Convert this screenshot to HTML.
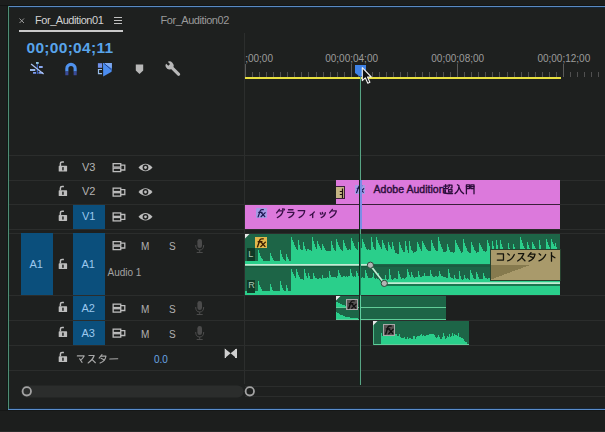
<!DOCTYPE html>
<html><head><meta charset="utf-8"><style>
*{margin:0;padding:0;box-sizing:border-box}
html,body{width:605px;height:432px;overflow:hidden;background:#1c1e1d;font-family:"Liberation Sans",sans-serif}
.a{position:absolute;white-space:nowrap;line-height:1}
</style></head><body>

<svg class="a" style="left:0;top:0" width="605" height="432" viewBox="0 0 605 432" shape-rendering="crispEdges">
<rect x="9" y="7" width="596" height="402" fill="#1e201f"/>
<rect x="0" y="5" width="605" height="1" fill="#131514"/>
<rect x="8" y="6" width="597" height="1" fill="#5a8ac2"/>
<rect x="9" y="7" width="596" height="1" fill="#15273a"/>
<rect x="7" y="6" width="1" height="404" fill="#0f1c16"/>
<rect x="8" y="6" width="1" height="404" fill="#4f8d75"/>
<rect x="9" y="7" width="1" height="402" fill="#1a2520"/>
<rect x="9" y="408" width="596" height="1" fill="#15273a"/>
<rect x="8" y="409" width="597" height="1" fill="#5a8cca"/>
<rect x="0" y="410" width="605" height="1" fill="#151716"/>
<rect x="0" y="431" width="605" height="1" fill="#2a2c2b"/>
<rect x="19" y="30" width="104" height="2" fill="#c9c9c9"/>
<rect x="114" y="17" width="8" height="1" fill="#c0c0c0"/>
<rect x="114" y="20" width="8" height="1" fill="#c0c0c0"/>
<rect x="114" y="23" width="8" height="1" fill="#c0c0c0"/>
<path d="M19.5,18.5 L24,23 M24,18.5 L19.5,23" stroke="#9a9a9a" stroke-width="1" shape-rendering="geometricPrecision"/>
<rect x="244" y="33" width="1" height="351" fill="#2c2e2d"/>
<rect x="9" y="155" width="596" height="1" fill="#2b2d2c"/>
<rect x="9" y="180" width="596" height="1" fill="#2b2d2c"/>
<rect x="9" y="204" width="596" height="1" fill="#2b2d2c"/>
<rect x="9" y="229" width="596" height="1" fill="#2b2d2c"/>
<rect x="9" y="233" width="596" height="1" fill="#2b2d2c"/>
<rect x="9" y="295" width="596" height="1" fill="#2b2d2c"/>
<rect x="9" y="320" width="596" height="1" fill="#2b2d2c"/>
<rect x="9" y="345" width="596" height="1" fill="#2b2d2c"/>
<rect x="9" y="370" width="596" height="1" fill="#2b2d2c"/>
<rect x="21" y="385.5" width="222.5" height="12" rx="6" fill="#2b2d2c" shape-rendering="geometricPrecision"/>
<rect x="245" y="386" width="360" height="1" fill="#2b2d2c"/>
<rect x="245" y="396" width="360" height="1" fill="#2b2d2c"/>
<circle cx="26.8" cy="391.3" r="4.2" fill="none" stroke="#a3a3a3" stroke-width="1.8" shape-rendering="geometricPrecision"/>
<circle cx="249.8" cy="391.3" r="4.2" fill="none" stroke="#a3a3a3" stroke-width="1.8" shape-rendering="geometricPrecision"/>
<rect x="245" y="64" width="1" height="13" fill="#5a5a5a"/>
<rect x="252" y="72" width="1" height="5" fill="#505050"/>
<rect x="259" y="72" width="1" height="5" fill="#505050"/>
<rect x="266" y="72" width="1" height="5" fill="#505050"/>
<rect x="273" y="72" width="1" height="5" fill="#505050"/>
<rect x="280" y="72" width="1" height="5" fill="#505050"/>
<rect x="287" y="72" width="1" height="5" fill="#505050"/>
<rect x="294" y="72" width="1" height="5" fill="#505050"/>
<rect x="301" y="72" width="1" height="5" fill="#505050"/>
<rect x="308" y="72" width="1" height="5" fill="#505050"/>
<rect x="316" y="72" width="1" height="5" fill="#505050"/>
<rect x="323" y="72" width="1" height="5" fill="#505050"/>
<rect x="330" y="72" width="1" height="5" fill="#505050"/>
<rect x="337" y="72" width="1" height="5" fill="#505050"/>
<rect x="344" y="72" width="1" height="5" fill="#505050"/>
<rect x="351" y="64" width="1" height="13" fill="#5a5a5a"/>
<rect x="358" y="72" width="1" height="5" fill="#505050"/>
<rect x="365" y="72" width="1" height="5" fill="#505050"/>
<rect x="372" y="72" width="1" height="5" fill="#505050"/>
<rect x="379" y="72" width="1" height="5" fill="#505050"/>
<rect x="386" y="72" width="1" height="5" fill="#505050"/>
<rect x="393" y="72" width="1" height="5" fill="#505050"/>
<rect x="400" y="72" width="1" height="5" fill="#505050"/>
<rect x="407" y="72" width="1" height="5" fill="#505050"/>
<rect x="415" y="72" width="1" height="5" fill="#505050"/>
<rect x="422" y="72" width="1" height="5" fill="#505050"/>
<rect x="429" y="72" width="1" height="5" fill="#505050"/>
<rect x="436" y="72" width="1" height="5" fill="#505050"/>
<rect x="443" y="72" width="1" height="5" fill="#505050"/>
<rect x="450" y="72" width="1" height="5" fill="#505050"/>
<rect x="457" y="64" width="1" height="13" fill="#5a5a5a"/>
<rect x="464" y="72" width="1" height="5" fill="#505050"/>
<rect x="471" y="72" width="1" height="5" fill="#505050"/>
<rect x="478" y="72" width="1" height="5" fill="#505050"/>
<rect x="485" y="72" width="1" height="5" fill="#505050"/>
<rect x="492" y="72" width="1" height="5" fill="#505050"/>
<rect x="499" y="72" width="1" height="5" fill="#505050"/>
<rect x="507" y="72" width="1" height="5" fill="#505050"/>
<rect x="514" y="72" width="1" height="5" fill="#505050"/>
<rect x="521" y="72" width="1" height="5" fill="#505050"/>
<rect x="528" y="72" width="1" height="5" fill="#505050"/>
<rect x="535" y="72" width="1" height="5" fill="#505050"/>
<rect x="542" y="72" width="1" height="5" fill="#505050"/>
<rect x="549" y="72" width="1" height="5" fill="#505050"/>
<rect x="556" y="72" width="1" height="5" fill="#505050"/>
<rect x="563" y="64" width="1" height="13" fill="#5a5a5a"/>
<rect x="570" y="72" width="1" height="5" fill="#505050"/>
<rect x="577" y="72" width="1" height="5" fill="#505050"/>
<rect x="584" y="72" width="1" height="5" fill="#505050"/>
<rect x="591" y="72" width="1" height="5" fill="#505050"/>
<rect x="598" y="72" width="1" height="5" fill="#505050"/>
<rect x="245" y="77" width="316" height="2" fill="#e8e040"/>
<rect x="73" y="205" width="32" height="24" fill="#0b4f7c"/>
<rect x="21" y="233" width="32" height="62" fill="#0b4f7c"/>
<rect x="73" y="233" width="32" height="62" fill="#0b4f7c"/>
<rect x="73" y="296" width="32" height="24" fill="#0b4f7c"/>
<rect x="73" y="321" width="32" height="24" fill="#0b4f7c"/>
<g shape-rendering="geometricPrecision"><rect x="58.699999999999996" y="165.8" width="8.4" height="5.8" rx="0.6" fill="#bdbdbd"/><path d="M60.4,166.0 L60.4,163.4 Q60.4,161.9 62.099999999999994,161.9 L63.9,161.9" fill="none" stroke="#bdbdbd" stroke-width="1.5"/><rect x="62.199999999999996" y="167.0" width="1.5" height="3.4" rx="0.6" fill="#1e201f"/></g>
<g fill="none" stroke="#bdbdbd" stroke-width="1.3" shape-rendering="geometricPrecision"><rect x="113.15" y="163.65" width="7.6" height="3.4"/><rect x="113.15" y="168.2" width="7.6" height="3.4"/><path d="M120.8,165.2 L124.8,165.2 L124.8,170.0 L120.8,170.0"/></g>
<g shape-rendering="geometricPrecision"><path d="M138.5,167.5 Q145.5,160.0 152.5,167.5 Q145.5,175.0 138.5,167.5 Z" fill="#bdbdbd"/><circle cx="145.5" cy="167.5" r="2.9" fill="#1f2120"/><circle cx="145.5" cy="167.5" r="1.4" fill="#bdbdbd"/></g>
<g shape-rendering="geometricPrecision"><rect x="58.699999999999996" y="190.3" width="8.4" height="5.8" rx="0.6" fill="#bdbdbd"/><path d="M60.4,190.5 L60.4,187.9 Q60.4,186.4 62.099999999999994,186.4 L63.9,186.4" fill="none" stroke="#bdbdbd" stroke-width="1.5"/><rect x="62.199999999999996" y="191.5" width="1.5" height="3.4" rx="0.6" fill="#1e201f"/></g>
<g fill="none" stroke="#bdbdbd" stroke-width="1.3" shape-rendering="geometricPrecision"><rect x="113.15" y="188.15" width="7.6" height="3.4"/><rect x="113.15" y="192.7" width="7.6" height="3.4"/><path d="M120.8,189.7 L124.8,189.7 L124.8,194.5 L120.8,194.5"/></g>
<g shape-rendering="geometricPrecision"><path d="M138.5,192 Q145.5,184.5 152.5,192 Q145.5,199.5 138.5,192 Z" fill="#bdbdbd"/><circle cx="145.5" cy="192" r="2.9" fill="#1f2120"/><circle cx="145.5" cy="192" r="1.4" fill="#bdbdbd"/></g>
<g shape-rendering="geometricPrecision"><rect x="58.699999999999996" y="215.10000000000002" width="8.4" height="5.8" rx="0.6" fill="#bdbdbd"/><path d="M60.4,215.3 L60.4,212.70000000000002 Q60.4,211.20000000000002 62.099999999999994,211.20000000000002 L63.9,211.20000000000002" fill="none" stroke="#bdbdbd" stroke-width="1.5"/><rect x="62.199999999999996" y="216.3" width="1.5" height="3.4" rx="0.6" fill="#1e201f"/></g>
<g fill="none" stroke="#bdbdbd" stroke-width="1.3" shape-rendering="geometricPrecision"><rect x="113.15" y="212.95000000000002" width="7.6" height="3.4"/><rect x="113.15" y="217.5" width="7.6" height="3.4"/><path d="M120.8,214.5 L124.8,214.5 L124.8,219.3 L120.8,219.3"/></g>
<g shape-rendering="geometricPrecision"><path d="M138.5,216.8 Q145.5,209.3 152.5,216.8 Q145.5,224.3 138.5,216.8 Z" fill="#bdbdbd"/><circle cx="145.5" cy="216.8" r="2.9" fill="#1f2120"/><circle cx="145.5" cy="216.8" r="1.4" fill="#bdbdbd"/></g>
<g shape-rendering="geometricPrecision"><rect x="58.699999999999996" y="263.3" width="8.4" height="5.8" rx="0.6" fill="#bdbdbd"/><path d="M60.4,263.5 L60.4,260.90000000000003 Q60.4,259.40000000000003 62.099999999999994,259.40000000000003 L63.9,259.40000000000003" fill="none" stroke="#bdbdbd" stroke-width="1.5"/><rect x="62.199999999999996" y="264.5" width="1.5" height="3.4" rx="0.6" fill="#1e201f"/></g>
<g fill="none" stroke="#bdbdbd" stroke-width="1.3" shape-rendering="geometricPrecision"><rect x="113.15" y="241.65" width="7.6" height="3.4"/><rect x="113.15" y="246.2" width="7.6" height="3.4"/><path d="M120.8,243.2 L124.8,243.2 L124.8,248.0 L120.8,248.0"/></g>
<g shape-rendering="geometricPrecision" fill="none" stroke="#4b4b4b"><rect x="197.39999999999998" y="239" width="4.6" height="9" rx="2.3" fill="#4b4b4b" stroke="none"/><path d="M195.7,245 Q195.7,250 199.7,250 Q203.7,250 203.7,245" stroke-width="1"/><path d="M199.7,250 L199.7,252.5 M196.7,252.5 L202.7,252.5" stroke-width="1"/></g>
<g shape-rendering="geometricPrecision"><rect x="58.699999999999996" y="306.3" width="8.4" height="5.8" rx="0.6" fill="#bdbdbd"/><path d="M60.4,306.5 L60.4,303.90000000000003 Q60.4,302.40000000000003 62.099999999999994,302.40000000000003 L63.9,302.40000000000003" fill="none" stroke="#bdbdbd" stroke-width="1.5"/><rect x="62.199999999999996" y="307.5" width="1.5" height="3.4" rx="0.6" fill="#1e201f"/></g>
<g fill="none" stroke="#bdbdbd" stroke-width="1.3" shape-rendering="geometricPrecision"><rect x="113.15" y="304.15" width="7.6" height="3.4"/><rect x="113.15" y="308.7" width="7.6" height="3.4"/><path d="M120.8,305.7 L124.8,305.7 L124.8,310.5 L120.8,310.5"/></g>
<g shape-rendering="geometricPrecision" fill="none" stroke="#4b4b4b"><rect x="197.39999999999998" y="301" width="4.6" height="9" rx="2.3" fill="#4b4b4b" stroke="none"/><path d="M195.7,307 Q195.7,312 199.7,312 Q203.7,312 203.7,307" stroke-width="1"/><path d="M199.7,312 L199.7,314.5 M196.7,314.5 L202.7,314.5" stroke-width="1"/></g>
<g shape-rendering="geometricPrecision"><rect x="58.699999999999996" y="331.3" width="8.4" height="5.8" rx="0.6" fill="#bdbdbd"/><path d="M60.4,331.5 L60.4,328.90000000000003 Q60.4,327.40000000000003 62.099999999999994,327.40000000000003 L63.9,327.40000000000003" fill="none" stroke="#bdbdbd" stroke-width="1.5"/><rect x="62.199999999999996" y="332.5" width="1.5" height="3.4" rx="0.6" fill="#1e201f"/></g>
<g fill="none" stroke="#bdbdbd" stroke-width="1.3" shape-rendering="geometricPrecision"><rect x="113.15" y="329.15" width="7.6" height="3.4"/><rect x="113.15" y="333.7" width="7.6" height="3.4"/><path d="M120.8,330.7 L124.8,330.7 L124.8,335.5 L120.8,335.5"/></g>
<g shape-rendering="geometricPrecision" fill="none" stroke="#4b4b4b"><rect x="197.39999999999998" y="326" width="4.6" height="9" rx="2.3" fill="#4b4b4b" stroke="none"/><path d="M195.7,332 Q195.7,337 199.7,337 Q203.7,337 203.7,332" stroke-width="1"/><path d="M199.7,337 L199.7,339.5 M196.7,339.5 L202.7,339.5" stroke-width="1"/></g>
<g shape-rendering="geometricPrecision"><rect x="58.699999999999996" y="356.3" width="8.4" height="5.8" rx="0.6" fill="#bdbdbd"/><path d="M60.4,356.5 L60.4,353.90000000000003 Q60.4,352.40000000000003 62.099999999999994,352.40000000000003 L63.9,352.40000000000003" fill="none" stroke="#bdbdbd" stroke-width="1.5"/><rect x="62.199999999999996" y="357.5" width="1.5" height="3.4" rx="0.6" fill="#1e201f"/></g>
<path d="M224.7,348.5 L230.6,353.3 L236.5,348.5 L236.5,358.2 L230.6,353.3 L224.7,358.2 Z" fill="#cfcfcf" shape-rendering="geometricPrecision"/>
<rect x="224.7" y="348.5" width="1.4" height="9.7" fill="#cfcfcf"/><rect x="235.1" y="348.5" width="1.4" height="9.7" fill="#cfcfcf"/>
<g shape-rendering="geometricPrecision" fill="none"><rect x="36" y="62" width="2.7" height="1.9" fill="#8fc4e0"/><path d="M37.3,64 L37.3,74" stroke="#3a6ad8" stroke-width="1"/><path d="M30,70 L35.3,70" stroke="#9ab8e8" stroke-width="2"/><path d="M39,67 L42.7,67" stroke="#8aa8f0" stroke-width="2"/><path d="M33,72.8 L36,72.8 M38.5,72.8 L43,72.8" stroke="#7a98ee" stroke-width="1.8"/><path d="M31.1,64 L43.6,73.9" stroke="#a8c0f0" stroke-width="1.3"/></g>
<path d="M65.3,71.5 L65.3,68.5 A5.7,5.7 0 0 1 76.7,68.5 L76.7,71.5 L73.6,71.5 L73.6,68.5 A2.6,2.6 0 0 0 68.4,68.5 L68.4,71.5 Z" fill="#4f92ee" shape-rendering="geometricPrecision"/>
<path d="M65.3,71.5 L68.4,71.5 L68.4,75.3 L65.3,75.3 Z M73.6,71.5 L76.7,71.5 L76.7,75.3 L73.6,75.3 Z" fill="#3a4a98" shape-rendering="geometricPrecision"/>
<g shape-rendering="geometricPrecision"><rect x="97.9" y="63.2" width="4.3" height="4.6" fill="#7190ea"/><path d="M102,69.5 L98.5,69.5 L98.5,73.6 L102,73.6" stroke="#98bce8" stroke-width="1.2" fill="none"/><path d="M103,63 L111.8,63 L111.8,68.2 L111.6,71.8 L103.2,76.5 Z" fill="#4b8cf0"/><path d="M103.2,63 L111.8,63 L111.8,68.2 Z" fill="#7fa8ee"/><path d="M104,63.4 L111.2,69.5" stroke="#1d3d8a" stroke-width="1"/></g>
<path d="M135.8,64.6 L143.2,64.6 L143.2,70.4 L139.5,74 L135.8,70.4 Z" fill="#b8b8b8" shape-rendering="geometricPrecision"/>
<g transform="translate(169.6,65.4) rotate(-45)" shape-rendering="geometricPrecision"><circle cx="0" cy="0" r="3.9" fill="#b8b8b8"/><rect x="-1.5" y="0" width="3.1" height="14.2" rx="1.4" fill="#b8b8b8"/><rect x="-1.25" y="-5" width="2.5" height="4.4" fill="#1e201f"/></g>
<rect x="336" y="180" width="224" height="24" fill="#dc79dc"/>
<rect x="245" y="205" width="315" height="24" fill="#dc79dc"/>
<rect x="336" y="204" width="224" height="1" fill="#3a1f3a"/>
<rect x="336" y="186" width="9" height="13" fill="#3e1e3c"/><rect x="336" y="187" width="8" height="11" fill="#c4b483"/>
<path d="M342.5,188.5 L342.5,198 M339.8,191.5 L342.5,191.5 M339.8,194.5 L342.5,194.5" stroke="#1e1010" stroke-width="1.2" fill="none" shape-rendering="geometricPrecision"/>
<rect x="354.5" y="184.5" width="10.5" height="9" fill="#a49be4"/>
<g transform="translate(354.5,184.5) scale(1.05,0.9)" fill="none" stroke="#1b1650" stroke-width="1.14" stroke-linecap="round" shape-rendering="geometricPrecision"><path d="M2.0,9.0 L4.0,2.6 Q4.4,1.4 5.6,1.4 L7.0,1.4"/><path d="M2.6,4.2 L5.8,4.2"/><path d="M5.0,4.6 L8.4,8.6"/><path d="M8.8,4.6 L4.8,8.8"/></g>
<rect x="256" y="208.3" width="10.5" height="9.6" fill="#a49be4"/>
<g transform="translate(256,208.3) scale(1.05,0.96)" fill="none" stroke="#1b1650" stroke-width="1.14" stroke-linecap="round" shape-rendering="geometricPrecision"><path d="M2.0,9.0 L4.0,2.6 Q4.4,1.4 5.6,1.4 L7.0,1.4"/><path d="M2.6,4.2 L5.8,4.2"/><path d="M5.0,4.6 L8.4,8.6"/><path d="M8.8,4.6 L4.8,8.8"/></g>
<rect x="245" y="234" width="315" height="61" fill="#1d6547"/>
<path d="M245,264 L245.0,261.1 L246.0,261.1 L246.0,261.1 L247.0,261.1 L247.0,261.1 L248.0,261.1 L248.0,261.1 L249.0,261.1 L249.0,250.9 L250.0,250.9 L250.0,255.3 L251.0,255.3 L251.0,258.1 L252.0,258.1 L252.0,260.1 L253.0,260.1 L253.0,261.1 L254.0,261.1 L254.0,261.1 L255.0,261.1 L255.0,261.1 L256.0,261.1 L256.0,261.1 L257.0,261.1 L257.0,261.1 L258.0,261.1 L258.0,249.5 L259.0,249.5 L259.0,253.1 L260.0,253.1 L260.0,255.8 L261.0,255.8 L261.0,257.8 L262.0,257.8 L262.0,259.4 L263.0,259.4 L263.0,260.5 L264.0,260.5 L264.0,261.1 L265.0,261.1 L265.0,261.1 L266.0,261.1 L266.0,261.1 L267.0,261.1 L267.0,261.1 L268.0,261.1 L268.0,261.1 L269.0,261.1 L269.0,261.1 L270.0,261.1 L270.0,253.0 L271.0,253.0 L271.0,256.1 L272.0,256.1 L272.0,258.3 L273.0,258.3 L273.0,259.9 L274.0,259.9 L274.0,261.1 L275.0,261.1 L275.0,261.1 L276.0,261.1 L276.0,261.1 L277.0,261.1 L277.0,261.1 L278.0,261.1 L278.0,261.1 L279.0,261.1 L279.0,261.1 L280.0,261.1 L280.0,249.5 L281.0,249.5 L281.0,253.6 L282.0,253.6 L282.0,256.6 L283.0,256.6 L283.0,258.7 L284.0,258.7 L284.0,260.2 L285.0,260.2 L285.0,261.1 L286.0,261.1 L286.0,253.6 L287.0,253.6 L287.0,257.0 L288.0,257.0 L288.0,259.3 L289.0,259.3 L289.0,260.9 L290.0,260.9 L290.0,261.1 L291.0,261.1 L291.0,237.0 L292.0,237.0 L292.0,239.9 L293.0,239.9 L293.0,242.4 L294.0,242.4 L294.0,244.7 L295.0,244.7 L295.0,246.7 L296.0,246.7 L296.0,248.5 L297.0,248.5 L297.0,249.5 L298.0,249.5 L298.0,240.1 L299.0,240.1 L299.0,245.2 L300.0,245.2 L300.0,248.6 L301.0,248.6 L301.0,249.9 L302.0,249.9 L302.0,249.7 L303.0,249.7 L303.0,242.1 L304.0,242.1 L304.0,245.6 L305.0,245.6 L305.0,248.6 L306.0,248.6 L306.0,250.5 L307.0,250.5 L307.0,249.0 L308.0,249.0 L308.0,249.2 L309.0,249.2 L309.0,249.8 L310.0,249.8 L310.0,250.0 L311.0,250.0 L311.0,251.0 L312.0,251.0 L312.0,236.9 L313.0,236.9 L313.0,240.7 L314.0,240.7 L314.0,244.1 L315.0,244.1 L315.0,246.9 L316.0,246.9 L316.0,249.3 L317.0,249.3 L317.0,241.2 L318.0,241.2 L318.0,243.9 L319.0,243.9 L319.0,246.3 L320.0,246.3 L320.0,248.4 L321.0,248.4 L321.0,250.2 L322.0,250.2 L322.0,243.6 L323.0,243.6 L323.0,245.8 L324.0,245.8 L324.0,247.8 L325.0,247.8 L325.0,249.6 L326.0,249.6 L326.0,251.1 L327.0,251.1 L327.0,250.9 L328.0,250.9 L328.0,251.0 L329.0,251.0 L329.0,251.2 L330.0,251.2 L330.0,251.4 L331.0,251.4 L331.0,241.2 L332.0,241.2 L332.0,244.6 L333.0,244.6 L333.0,247.5 L334.0,247.5 L334.0,249.9 L335.0,249.9 L335.0,251.1 L336.0,251.1 L336.0,239.4 L337.0,239.4 L337.0,242.1 L338.0,242.1 L338.0,244.5 L339.0,244.5 L339.0,246.7 L340.0,246.7 L340.0,248.6 L341.0,248.6 L341.0,250.3 L342.0,250.3 L342.0,251.3 L343.0,251.3 L343.0,240.0 L344.0,240.0 L344.0,243.1 L345.0,243.1 L345.0,245.8 L346.0,245.8 L346.0,248.1 L347.0,248.1 L347.0,250.1 L348.0,250.1 L348.0,249.8 L349.0,249.8 L349.0,249.4 L350.0,249.4 L350.0,250.2 L351.0,250.2 L351.0,238.0 L352.0,238.0 L352.0,240.9 L353.0,240.9 L353.0,243.4 L354.0,243.4 L354.0,245.6 L355.0,245.6 L355.0,247.6 L356.0,247.6 L356.0,249.4 L357.0,249.4 L357.0,249.8 L358.0,249.8 L358.0,241.7 L359.0,241.7 L359.0,244.1 L360.0,244.1 L360.0,246.2 L361.0,246.2 L361.0,248.1 L362.0,248.1 L362.0,238.6 L363.0,238.6 L363.0,241.6 L364.0,241.6 L364.0,244.2 L365.0,244.2 L365.0,246.5 L366.0,246.5 L366.0,248.5 L367.0,248.5 L367.0,249.7 L368.0,249.7 L368.0,249.2 L369.0,249.2 L369.0,249.6 L370.0,249.6 L370.0,249.6 L371.0,249.6 L371.0,237.0 L372.0,237.0 L372.0,242.3 L373.0,242.3 L373.0,246.5 L374.0,246.5 L374.0,248.9 L375.0,248.9 L375.0,250.2 L376.0,250.2 L376.0,237.2 L377.0,237.2 L377.0,240.1 L378.0,240.1 L378.0,242.6 L379.0,242.6 L379.0,244.9 L380.0,244.9 L380.0,246.9 L381.0,246.9 L381.0,248.7 L382.0,248.7 L382.0,240.1 L383.0,240.1 L383.0,242.9 L384.0,242.9 L384.0,245.4 L385.0,245.4 L385.0,247.6 L386.0,247.6 L386.0,249.5 L387.0,249.5 L387.0,251.2 L388.0,251.2 L388.0,242.2 L389.0,242.2 L389.0,244.9 L390.0,244.9 L390.0,247.3 L391.0,247.3 L391.0,249.3 L392.0,249.3 L392.0,241.6 L393.0,241.6 L393.0,246.1 L394.0,246.1 L394.0,249.7 L395.0,249.7 L395.0,252.6 L396.0,252.6 L396.0,252.6 L397.0,252.6 L397.0,253.8 L398.0,253.8 L398.0,253.9 L399.0,253.9 L399.0,241.6 L400.0,241.6 L400.0,245.0 L401.0,245.0 L401.0,247.9 L402.0,247.9 L402.0,250.3 L403.0,250.3 L403.0,252.4 L404.0,252.4 L404.0,252.3 L405.0,252.3 L405.0,240.5 L406.0,240.5 L406.0,245.5 L407.0,245.5 L407.0,249.5 L408.0,249.5 L408.0,252.5 L409.0,252.5 L409.0,240.9 L410.0,240.9 L410.0,245.8 L411.0,245.8 L411.0,249.7 L412.0,249.7 L412.0,251.4 L413.0,251.4 L413.0,252.5 L414.0,252.5 L414.0,251.6 L415.0,251.6 L415.0,252.2 L416.0,252.2 L416.0,251.1 L417.0,251.1 L417.0,241.7 L418.0,241.7 L418.0,244.3 L419.0,244.3 L419.0,246.6 L420.0,246.6 L420.0,248.7 L421.0,248.7 L421.0,250.5 L422.0,250.5 L422.0,240.6 L423.0,240.6 L423.0,243.1 L424.0,243.1 L424.0,245.3 L425.0,245.3 L425.0,247.2 L426.0,247.2 L426.0,249.0 L427.0,249.0 L427.0,249.8 L428.0,249.8 L428.0,251.0 L429.0,251.0 L429.0,251.3 L430.0,251.3 L430.0,250.8 L431.0,250.8 L431.0,240.2 L432.0,240.2 L432.0,243.2 L433.0,243.2 L433.0,245.9 L434.0,245.9 L434.0,248.2 L435.0,248.2 L435.0,250.2 L436.0,250.2 L436.0,251.1 L437.0,251.1 L437.0,250.8 L438.0,250.8 L438.0,236.9 L439.0,236.9 L439.0,240.8 L440.0,240.8 L440.0,244.1 L441.0,244.1 L441.0,246.9 L442.0,246.9 L442.0,249.4 L443.0,249.4 L443.0,251.5 L444.0,251.5 L444.0,252.0 L445.0,252.0 L445.0,252.1 L446.0,252.1 L446.0,250.7 L447.0,250.7 L447.0,243.6 L448.0,243.6 L448.0,247.2 L449.0,247.2 L449.0,250.2 L450.0,250.2 L450.0,251.7 L451.0,251.7 L451.0,252.1 L452.0,252.1 L452.0,251.8 L453.0,251.8 L453.0,252.6 L454.0,252.6 L454.0,251.6 L455.0,251.6 L455.0,239.9 L456.0,239.9 L456.0,242.7 L457.0,242.7 L457.0,245.1 L458.0,245.1 L458.0,247.3 L459.0,247.3 L459.0,249.2 L460.0,249.2 L460.0,250.9 L461.0,250.9 L461.0,252.5 L462.0,252.5 L462.0,252.4 L463.0,252.4 L463.0,239.3 L464.0,239.3 L464.0,242.7 L465.0,242.7 L465.0,245.7 L466.0,245.7 L466.0,248.3 L467.0,248.3 L467.0,250.5 L468.0,250.5 L468.0,252.4 L469.0,252.4 L469.0,252.6 L470.0,252.6 L470.0,253.1 L471.0,253.1 L471.0,242.3 L472.0,242.3 L472.0,245.0 L473.0,245.0 L473.0,247.4 L474.0,247.4 L474.0,249.5 L475.0,249.5 L475.0,251.4 L476.0,251.4 L476.0,252.5 L477.0,252.5 L477.0,251.8 L478.0,251.8 L478.0,251.9 L479.0,251.9 L479.0,242.6 L480.0,242.6 L480.0,245.1 L481.0,245.1 L481.0,247.2 L482.0,247.2 L482.0,249.2 L483.0,249.2 L483.0,250.8 L484.0,250.8 L484.0,251.2 L485.0,251.2 L485.0,252.4 L486.0,252.4 L486.0,251.1 L487.0,251.1 L487.0,240.2 L488.0,240.2 L488.0,243.4 L489.0,243.4 L489.0,246.2 L490.0,246.2 L490.0,248.6 L491.0,248.6 L491.0,250.7 L492.0,250.7 L492.0,241.1 L493.0,241.1 L493.0,245.6 L494.0,245.6 L494.0,249.2 L495.0,249.2 L495.0,252.1 L496.0,252.1 L496.0,239.5 L497.0,239.5 L497.0,244.8 L498.0,244.8 L498.0,248.9 L499.0,248.9 L499.0,252.2 L500.0,252.2 L500.0,240.2 L501.0,240.2 L501.0,243.9 L502.0,243.9 L502.0,247.0 L503.0,247.0 L503.0,249.6 L504.0,249.6 L504.0,251.8 L505.0,251.8 L505.0,253.7 L506.0,253.7 L506.0,254.8 L507.0,254.8 L507.0,256.2 L508.0,256.2 L508.0,243.3 L509.0,243.3 L509.0,247.5 L510.0,247.5 L510.0,250.8 L511.0,250.8 L511.0,253.4 L512.0,253.4 L512.0,255.6 L513.0,255.6 L513.0,243.8 L514.0,243.8 L514.0,246.6 L515.0,246.6 L515.0,249.0 L516.0,249.0 L516.0,251.1 L517.0,251.1 L517.0,252.9 L518.0,252.9 L518.0,254.3 L519.0,254.3 L519.0,254.7 L520.0,254.7 L520.0,237.1 L521.0,237.1 L521.0,240.2 L522.0,240.2 L522.0,243.0 L523.0,243.0 L523.0,245.5 L524.0,245.5 L524.0,247.7 L525.0,247.7 L525.0,249.6 L526.0,249.6 L526.0,251.3 L527.0,251.3 L527.0,242.2 L528.0,242.2 L528.0,245.3 L529.0,245.3 L529.0,248.1 L530.0,248.1 L530.0,250.4 L531.0,250.4 L531.0,252.4 L532.0,252.4 L532.0,241.6 L533.0,241.6 L533.0,244.1 L534.0,244.1 L534.0,246.3 L535.0,246.3 L535.0,248.3 L536.0,248.3 L536.0,250.0 L537.0,250.0 L537.0,251.6 L538.0,251.6 L538.0,252.9 L539.0,252.9 L539.0,240.2 L540.0,240.2 L540.0,244.9 L541.0,244.9 L541.0,248.7 L542.0,248.7 L542.0,251.7 L543.0,251.7 L543.0,254.1 L544.0,254.1 L544.0,256.1 L545.0,256.1 L545.0,254.3 L546.0,254.3 L546.0,239.4 L547.0,239.4 L547.0,242.1 L548.0,242.1 L548.0,244.5 L549.0,244.5 L549.0,246.7 L550.0,246.7 L550.0,248.6 L551.0,248.6 L551.0,238.8 L552.0,238.8 L552.0,241.5 L553.0,241.5 L553.0,243.9 L554.0,243.9 L554.0,246.0 L555.0,246.0 L555.0,242.8 L556.0,242.8 L556.0,246.5 L557.0,246.5 L557.0,249.6 L558.0,249.6 L558.0,252.2 L559.0,252.2 L559.0,253.7 L560.0,253.7 L560,264 Z" fill="#2acf8b"/>
<path d="M245,295 L245.0,292.2 L246.0,292.2 L246.0,292.2 L247.0,292.2 L247.0,292.2 L248.0,292.2 L248.0,292.2 L249.0,292.2 L249.0,282.4 L250.0,282.4 L250.0,286.6 L251.0,286.6 L251.0,289.3 L252.0,289.3 L252.0,291.2 L253.0,291.2 L253.0,292.2 L254.0,292.2 L254.0,292.2 L255.0,292.2 L255.0,292.2 L256.0,292.2 L256.0,292.2 L257.0,292.2 L257.0,292.2 L258.0,292.2 L258.0,281.0 L259.0,281.0 L259.0,284.5 L260.0,284.5 L260.0,287.1 L261.0,287.1 L261.0,289.1 L262.0,289.1 L262.0,290.5 L263.0,290.5 L263.0,291.6 L264.0,291.6 L264.0,292.2 L265.0,292.2 L265.0,292.2 L266.0,292.2 L266.0,292.2 L267.0,292.2 L267.0,292.2 L268.0,292.2 L268.0,292.2 L269.0,292.2 L269.0,292.2 L270.0,292.2 L270.0,284.4 L271.0,284.4 L271.0,287.4 L272.0,287.4 L272.0,289.5 L273.0,289.5 L273.0,291.1 L274.0,291.1 L274.0,292.2 L275.0,292.2 L275.0,292.2 L276.0,292.2 L276.0,292.2 L277.0,292.2 L277.0,292.2 L278.0,292.2 L278.0,292.2 L279.0,292.2 L279.0,292.2 L280.0,292.2 L280.0,281.0 L281.0,281.0 L281.0,285.0 L282.0,285.0 L282.0,287.8 L283.0,287.8 L283.0,289.8 L284.0,289.8 L284.0,291.3 L285.0,291.3 L285.0,292.2 L286.0,292.2 L286.0,284.9 L287.0,284.9 L287.0,288.2 L288.0,288.2 L288.0,290.5 L289.0,290.5 L289.0,292.0 L290.0,292.0 L290.0,292.2 L291.0,292.2 L291.0,269.0 L292.0,269.0 L292.0,271.7 L293.0,271.7 L293.0,274.1 L294.0,274.1 L294.0,276.3 L295.0,276.3 L295.0,278.3 L296.0,278.3 L296.0,268.5 L297.0,268.5 L297.0,271.7 L298.0,271.7 L298.0,274.5 L299.0,274.5 L299.0,276.9 L300.0,276.9 L300.0,278.7 L301.0,278.7 L301.0,278.8 L302.0,278.8 L302.0,278.7 L303.0,278.7 L303.0,279.6 L304.0,279.6 L304.0,269.4 L305.0,269.4 L305.0,272.8 L306.0,272.8 L306.0,275.8 L307.0,275.8 L307.0,278.3 L308.0,278.3 L308.0,273.2 L309.0,273.2 L309.0,276.3 L310.0,276.3 L310.0,278.7 L311.0,278.7 L311.0,279.2 L312.0,279.2 L312.0,279.1 L313.0,279.1 L313.0,272.6 L314.0,272.6 L314.0,275.7 L315.0,275.7 L315.0,278.4 L316.0,278.4 L316.0,278.0 L317.0,278.0 L317.0,278.6 L318.0,278.6 L318.0,279.2 L319.0,279.2 L319.0,277.6 L320.0,277.6 L320.0,277.6 L321.0,277.6 L321.0,278.9 L322.0,278.9 L322.0,275.0 L323.0,275.0 L323.0,278.1 L324.0,278.1 L324.0,278.2 L325.0,278.2 L325.0,277.6 L326.0,277.6 L326.0,278.3 L327.0,278.3 L327.0,277.3 L328.0,277.3 L328.0,278.3 L329.0,278.3 L329.0,271.2 L330.0,271.2 L330.0,274.6 L331.0,274.6 L331.0,277.4 L332.0,277.4 L332.0,277.2 L333.0,277.2 L333.0,276.8 L334.0,276.8 L334.0,276.9 L335.0,276.9 L335.0,277.0 L336.0,277.0 L336.0,277.5 L337.0,277.5 L337.0,276.3 L338.0,276.3 L338.0,269.6 L339.0,269.6 L339.0,272.5 L340.0,272.5 L340.0,275.1 L341.0,275.1 L341.0,276.6 L342.0,276.6 L342.0,276.6 L343.0,276.6 L343.0,276.0 L344.0,276.0 L344.0,276.0 L345.0,276.0 L345.0,276.9 L346.0,276.9 L346.0,275.7 L347.0,275.7 L347.0,276.5 L348.0,276.5 L348.0,276.2 L349.0,276.2 L349.0,275.7 L350.0,275.7 L350.0,269.0 L351.0,269.0 L351.0,272.7 L352.0,272.7 L352.0,275.8 L353.0,275.8 L353.0,276.5 L354.0,276.5 L354.0,276.4 L355.0,276.4 L355.0,277.0 L356.0,277.0 L356.0,270.7 L357.0,270.7 L357.0,273.4 L358.0,273.4 L358.0,275.7 L359.0,275.7 L359.0,277.5 L360.0,277.5 L360.0,276.8 L361.0,276.8 L361.0,277.5 L362.0,277.5 L362.0,276.7 L363.0,276.7 L363.0,277.9 L364.0,277.9 L364.0,277.6 L365.0,277.6 L365.0,269.9 L366.0,269.9 L366.0,273.4 L367.0,273.4 L367.0,276.4 L368.0,276.4 L368.0,277.8 L369.0,277.8 L369.0,278.3 L370.0,278.3 L370.0,278.3 L371.0,278.3 L371.0,278.0 L372.0,278.0 L372.0,277.3 L373.0,277.3 L373.0,273.1 L374.0,273.1 L374.0,277.5 L375.0,277.5 L375.0,279.0 L376.0,279.0 L376.0,277.8 L377.0,277.8 L377.0,278.8 L378.0,278.8 L378.0,273.3 L379.0,273.3 L379.0,277.1 L380.0,277.1 L380.0,278.1 L381.0,278.1 L381.0,279.7 L382.0,279.7 L382.0,279.3 L383.0,279.3 L383.0,278.5 L384.0,278.5 L384.0,279.2 L385.0,279.2 L385.0,275.3 L386.0,275.3 L386.0,279.4 L387.0,279.4 L387.0,279.8 L388.0,279.8 L388.0,278.8 L389.0,278.8 L389.0,268.9 L390.0,268.9 L390.0,274.5 L391.0,274.5 L391.0,278.9 L392.0,278.9 L392.0,279.8 L393.0,279.8 L393.0,279.2 L394.0,279.2 L394.0,278.4 L395.0,278.4 L395.0,278.3 L396.0,278.3 L396.0,278.5 L397.0,278.5 L397.0,279.2 L398.0,279.2 L398.0,270.8 L399.0,270.8 L399.0,274.0 L400.0,274.0 L400.0,276.7 L401.0,276.7 L401.0,278.8 L402.0,278.8 L402.0,277.6 L403.0,277.6 L403.0,277.5 L404.0,277.5 L404.0,278.7 L405.0,278.7 L405.0,278.4 L406.0,278.4 L406.0,277.3 L407.0,277.3 L407.0,268.7 L408.0,268.7 L408.0,271.9 L409.0,271.9 L409.0,274.7 L410.0,274.7 L410.0,277.1 L411.0,277.1 L411.0,271.5 L412.0,271.5 L412.0,274.6 L413.0,274.6 L413.0,277.4 L414.0,277.4 L414.0,277.5 L415.0,277.5 L415.0,276.7 L416.0,276.7 L416.0,276.5 L417.0,276.5 L417.0,277.4 L418.0,277.4 L418.0,271.2 L419.0,271.2 L419.0,274.7 L420.0,274.7 L420.0,277.0 L421.0,277.0 L421.0,276.6 L422.0,276.6 L422.0,275.6 L423.0,275.6 L423.0,276.3 L424.0,276.3 L424.0,272.8 L425.0,272.8 L425.0,275.6 L426.0,275.6 L426.0,275.5 L427.0,275.5 L427.0,275.8 L428.0,275.8 L428.0,276.4 L429.0,276.4 L429.0,276.1 L430.0,276.1 L430.0,269.9 L431.0,269.9 L431.0,273.8 L432.0,273.8 L432.0,276.1 L433.0,276.1 L433.0,276.6 L434.0,276.6 L434.0,276.6 L435.0,276.6 L435.0,276.0 L436.0,276.0 L436.0,276.3 L437.0,276.3 L437.0,277.3 L438.0,277.3 L438.0,276.2 L439.0,276.2 L439.0,271.4 L440.0,271.4 L440.0,273.9 L441.0,273.9 L441.0,276.1 L442.0,276.1 L442.0,276.2 L443.0,276.2 L443.0,276.9 L444.0,276.9 L444.0,276.6 L445.0,276.6 L445.0,277.4 L446.0,277.4 L446.0,278.0 L447.0,278.0 L447.0,277.6 L448.0,277.6 L448.0,268.9 L449.0,268.9 L449.0,273.0 L450.0,273.0 L450.0,276.5 L451.0,276.5 L451.0,277.8 L452.0,277.8 L452.0,277.7 L453.0,277.7 L453.0,278.7 L454.0,278.7 L454.0,275.0 L455.0,275.0 L455.0,277.9 L456.0,277.9 L456.0,278.5 L457.0,278.5 L457.0,278.9 L458.0,278.9 L458.0,278.7 L459.0,278.7 L459.0,270.9 L460.0,270.9 L460.0,276.2 L461.0,276.2 L461.0,279.3 L462.0,279.3 L462.0,279.5 L463.0,279.5 L463.0,279.2 L464.0,279.2 L464.0,275.0 L465.0,275.0 L465.0,278.0 L466.0,278.0 L466.0,278.7 L467.0,278.7 L467.0,278.3 L468.0,278.3 L468.0,279.3 L469.0,279.3 L469.0,279.8 L470.0,279.8 L470.0,269.7 L471.0,269.7 L471.0,272.8 L472.0,272.8 L472.0,275.4 L473.0,275.4 L473.0,277.8 L474.0,277.8 L474.0,279.2 L475.0,279.2 L475.0,279.4 L476.0,279.4 L476.0,271.5 L477.0,271.5 L477.0,274.3 L478.0,274.3 L478.0,276.8 L479.0,276.8 L479.0,278.9 L480.0,278.9 L480.0,279.0 L481.0,279.0 L481.0,279.0 L482.0,279.0 L482.0,278.6 L483.0,278.6 L483.0,273.4 L484.0,273.4 L484.0,275.8 L485.0,275.8 L485.0,277.9 L486.0,277.9 L486.0,277.7 L487.0,277.7 L487.0,278.5 L488.0,278.5 L488.0,277.9 L489.0,277.9 L489.0,277.6 L490.0,277.6 L490.0,277.1 L491.0,277.1 L491.0,278.0 L492.0,278.0 L492.0,271.9 L493.0,271.9 L493.0,275.6 L494.0,275.6 L494.0,276.7 L495.0,276.7 L495.0,277.6 L496.0,277.6 L496.0,277.0 L497.0,277.0 L497.0,273.4 L498.0,273.4 L498.0,277.0 L499.0,277.0 L499.0,276.5 L500.0,276.5 L500.0,276.4 L501.0,276.4 L501.0,275.8 L502.0,275.8 L502.0,276.4 L503.0,276.4 L503.0,276.2 L504.0,276.2 L504.0,276.7 L505.0,276.7 L505.0,275.0 L506.0,275.0 L506.0,276.6 L507.0,276.6 L507.0,276.3 L508.0,276.3 L508.0,276.5 L509.0,276.5 L509.0,276.6 L510.0,276.6 L510.0,276.9 L511.0,276.9 L511.0,276.7 L512.0,276.7 L512.0,270.3 L513.0,270.3 L513.0,274.6 L514.0,274.6 L514.0,277.1 L515.0,277.1 L515.0,275.8 L516.0,275.8 L516.0,276.7 L517.0,276.7 L517.0,275.7 L518.0,275.7 L518.0,276.3 L519.0,276.3 L519.0,268.5 L520.0,268.5 L520.0,273.7 L521.0,273.7 L521.0,276.0 L522.0,276.0 L522.0,277.1 L523.0,277.1 L523.0,277.5 L524.0,277.5 L524.0,276.7 L525.0,276.7 L525.0,276.4 L526.0,276.4 L526.0,276.9 L527.0,276.9 L527.0,271.2 L528.0,271.2 L528.0,275.6 L529.0,275.6 L529.0,277.2 L530.0,277.2 L530.0,277.9 L531.0,277.9 L531.0,277.8 L532.0,277.8 L532.0,278.0 L533.0,278.0 L533.0,278.1 L534.0,278.1 L534.0,278.1 L535.0,278.1 L535.0,274.8 L536.0,274.8 L536.0,277.4 L537.0,277.4 L537.0,278.8 L538.0,278.8 L538.0,278.8 L539.0,278.8 L539.0,277.7 L540.0,277.7 L540.0,278.5 L541.0,278.5 L541.0,273.1 L542.0,273.1 L542.0,276.7 L543.0,276.7 L543.0,278.1 L544.0,278.1 L544.0,278.3 L545.0,278.3 L545.0,279.1 L546.0,279.1 L546.0,278.5 L547.0,278.5 L547.0,269.1 L548.0,269.1 L548.0,272.0 L549.0,272.0 L549.0,274.5 L550.0,274.5 L550.0,276.7 L551.0,276.7 L551.0,278.8 L552.0,278.8 L552.0,278.4 L553.0,278.4 L553.0,279.8 L554.0,279.8 L554.0,279.3 L555.0,279.3 L555.0,271.4 L556.0,271.4 L556.0,276.3 L557.0,276.3 L557.0,279.5 L558.0,279.5 L558.0,278.5 L559.0,278.5 L559.0,279.1 L560.0,279.1 L560,295 Z" fill="#2acf8b"/>
<rect x="245" y="261" width="315" height="3" fill="#2acf8b"/>
<rect x="245" y="291" width="315" height="4" fill="#2acf8b"/>
<rect x="245" y="265" width="315" height="2" fill="#1a5c40"/>
<rect x="246.5" y="248" width="8.5" height="13" fill="#103a27"/>
<rect x="246.5" y="279.5" width="8.5" height="13" fill="#103a27"/>
<rect x="255.2" y="237.3" width="11.6" height="10.6" fill="#e2b84c"/>
<g transform="translate(255.2,237.3) scale(1.16,1.06)" fill="none" stroke="#3a1c00" stroke-width="1.21" stroke-linecap="round" shape-rendering="geometricPrecision"><path d="M2.0,9.0 L4.0,2.6 Q4.4,1.4 5.6,1.4 L7.0,1.4"/><path d="M2.6,4.2 L5.8,4.2"/><path d="M5.0,4.6 L8.4,8.6"/><path d="M8.8,4.6 L4.8,8.8"/></g>
<path d="M245,266.6 L370,266.6 L384.2,285 L560,285" stroke="#165a3c" stroke-width="1.4" fill="none" shape-rendering="geometricPrecision"/>
<path d="M245,264.9 L370,264.9 L384.2,283.2 L560,283.2" stroke="#c2ecd4" stroke-width="1.7" fill="none" shape-rendering="geometricPrecision"/>
<rect x="490.5" y="249.5" width="69.5" height="30.5" fill="#a99a6b" stroke="#27422f" stroke-width="1"/>
<path d="M491,265 L530,265 L491,279.5 Z" fill="#867a4e"/>
<circle cx="370.4" cy="265.2" r="3.1" fill="#b4b4b4" stroke="#2b4a3a" stroke-width="1" shape-rendering="geometricPrecision"/>
<circle cx="384.3" cy="283.4" r="3.1" fill="#b4b4b4" stroke="#2b4a3a" stroke-width="1" shape-rendering="geometricPrecision"/>
<path d="M245,234 L249.5,234 L245,238.5 Z" fill="#e8e8e8" shape-rendering="geometricPrecision"/>
<rect x="336" y="296" width="110" height="24" fill="#1d6547"/>
<path d="M336,307 L336.0,301.5 L337.0,301.5 L337.0,302.2 L338.0,302.2 L338.0,302.9 L339.0,302.9 L339.0,303.4 L340.0,303.4 L340.0,303.9 L341.0,303.9 L341.0,304.3 L342.0,304.3 L342.0,304.7 L343.0,304.7 L343.0,305.0 L344.0,305.0 L344.0,305.2 L345.0,305.2 L345.0,305.5 L346.0,305.5 L346.0,305.7 L347.0,305.7 L347.0,305.9 L348.0,305.9 L348.0,306.0 L349.0,306.0 L349.0,306.1 L350.0,306.1 L350.0,306.3 L351.0,306.3 L351.0,306.4 L352.0,306.4 L352.0,306.4 L353.0,306.4 L353.0,306.5 L354.0,306.5 L354.0,306.6 L355.0,306.6 L355.0,306.6 L356.0,306.6 L356.0,306.7 L357.0,306.7 L357.0,306.7 L358.0,306.7 L358.0,306.8 L359.0,306.8 L359.0,306.8 L360.0,306.8 L360.0,306.8 L361.0,306.8 L361.0,306.8 L362.0,306.8 L362.0,306.9 L363.0,306.9 L363.0,306.9 L364.0,306.9 L364.0,306.9 L365.0,306.9 L365.0,306.9 L366.0,306.9 L366.0,306.9 L367.0,306.9 L367.0,306.9 L368.0,306.9 L368.0,306.9 L369.0,306.9 L369.0,307.0 L370.0,307.0 L370.0,307.0 L371.0,307.0 L371.0,307.0 L372.0,307.0 L372.0,307.0 L373.0,307.0 L373.0,307.0 L374.0,307.0 L374.0,307.0 L375.0,307.0 L375.0,307.0 L376.0,307.0 L376.0,307.0 L377.0,307.0 L377.0,307.0 L378.0,307.0 L378.0,307.0 L379.0,307.0 L379.0,307.0 L380.0,307.0 L380.0,307.0 L381.0,307.0 L381.0,307.0 L382.0,307.0 L382.0,307.0 L383.0,307.0 L383.0,307.0 L384.0,307.0 L384.0,307.0 L385.0,307.0 L385.0,307.0 L386.0,307.0 L386.0,307.0 L387.0,307.0 L387.0,307.0 L388.0,307.0 L388.0,307.0 L389.0,307.0 L389.0,307.0 L390.0,307.0 L390.0,307.0 L391.0,307.0 L391.0,307.0 L392.0,307.0 L392.0,307.0 L393.0,307.0 L393.0,307.0 L394.0,307.0 L394.0,307.0 L395.0,307.0 L395.0,307.0 L396.0,307.0 L396.0,307.0 L397.0,307.0 L397.0,307.0 L398.0,307.0 L398.0,307.0 L399.0,307.0 L399.0,307.0 L400.0,307.0 L400.0,307.0 L401.0,307.0 L401.0,307.0 L402.0,307.0 L402.0,307.0 L403.0,307.0 L403.0,307.0 L404.0,307.0 L404.0,307.0 L405.0,307.0 L405.0,307.0 L406.0,307.0 L406.0,307.0 L407.0,307.0 L407.0,307.0 L408.0,307.0 L408.0,307.0 L409.0,307.0 L409.0,307.0 L410.0,307.0 L410.0,307.0 L411.0,307.0 L411.0,307.0 L412.0,307.0 L412.0,307.0 L413.0,307.0 L413.0,307.0 L414.0,307.0 L414.0,307.0 L415.0,307.0 L415.0,307.0 L416.0,307.0 L416.0,307.0 L417.0,307.0 L417.0,307.0 L418.0,307.0 L418.0,307.0 L419.0,307.0 L419.0,307.0 L420.0,307.0 L420.0,307.0 L421.0,307.0 L421.0,307.0 L422.0,307.0 L422.0,307.0 L423.0,307.0 L423.0,307.0 L424.0,307.0 L424.0,307.0 L425.0,307.0 L425.0,307.0 L426.0,307.0 L426.0,307.0 L427.0,307.0 L427.0,307.0 L428.0,307.0 L428.0,307.0 L429.0,307.0 L429.0,307.0 L430.0,307.0 L430.0,307.0 L431.0,307.0 L431.0,307.0 L432.0,307.0 L432.0,307.0 L433.0,307.0 L433.0,307.0 L434.0,307.0 L434.0,307.0 L435.0,307.0 L435.0,307.0 L436.0,307.0 L436.0,307.0 L437.0,307.0 L437.0,307.0 L438.0,307.0 L438.0,307.0 L439.0,307.0 L439.0,307.0 L440.0,307.0 L440.0,307.0 L441.0,307.0 L441.0,307.0 L442.0,307.0 L442.0,307.0 L443.0,307.0 L443.0,307.0 L444.0,307.0 L444.0,307.0 L445.0,307.0 L445.0,307.0 L446.0,307.0 L446,307 Z" fill="#2acf8b"/>
<path d="M336,319 L336.0,311.8 L337.0,311.8 L337.0,312.6 L338.0,312.6 L338.0,313.3 L339.0,313.3 L339.0,313.9 L340.0,313.9 L340.0,314.5 L341.0,314.5 L341.0,315.0 L342.0,315.0 L342.0,315.4 L343.0,315.4 L343.0,315.8 L344.0,315.8 L344.0,316.2 L345.0,316.2 L345.0,316.5 L346.0,316.5 L346.0,316.8 L347.0,316.8 L347.0,317.0 L348.0,317.0 L348.0,317.2 L349.0,317.2 L349.0,317.4 L350.0,317.4 L350.0,317.6 L351.0,317.6 L351.0,317.8 L352.0,317.8 L352.0,317.9 L353.0,317.9 L353.0,318.0 L354.0,318.0 L354.0,318.1 L355.0,318.1 L355.0,318.2 L356.0,318.2 L356.0,318.3 L357.0,318.3 L357.0,318.4 L358.0,318.4 L358.0,318.5 L359.0,318.5 L359.0,318.5 L360.0,318.5 L360.0,318.6 L361.0,318.6 L361.0,318.6 L362.0,318.6 L362.0,318.7 L363.0,318.7 L363.0,318.7 L364.0,318.7 L364.0,318.7 L365.0,318.7 L365.0,318.8 L366.0,318.8 L366.0,318.8 L367.0,318.8 L367.0,318.8 L368.0,318.8 L368.0,318.8 L369.0,318.8 L369.0,318.9 L370.0,318.9 L370.0,318.9 L371.0,318.9 L371.0,318.9 L372.0,318.9 L372.0,318.9 L373.0,318.9 L373.0,318.9 L374.0,318.9 L374.0,318.9 L375.0,318.9 L375.0,318.9 L376.0,318.9 L376.0,318.9 L377.0,318.9 L377.0,318.9 L378.0,318.9 L378.0,318.9 L379.0,318.9 L379.0,319.0 L380.0,319.0 L380.0,319.0 L381.0,319.0 L381.0,319.0 L382.0,319.0 L382.0,319.0 L383.0,319.0 L383.0,319.0 L384.0,319.0 L384.0,319.0 L385.0,319.0 L385.0,319.0 L386.0,319.0 L386.0,319.0 L387.0,319.0 L387.0,319.0 L388.0,319.0 L388.0,319.0 L389.0,319.0 L389.0,319.0 L390.0,319.0 L390.0,319.0 L391.0,319.0 L391.0,319.0 L392.0,319.0 L392.0,319.0 L393.0,319.0 L393.0,319.0 L394.0,319.0 L394.0,319.0 L395.0,319.0 L395.0,319.0 L396.0,319.0 L396.0,319.0 L397.0,319.0 L397.0,319.0 L398.0,319.0 L398.0,319.0 L399.0,319.0 L399.0,319.0 L400.0,319.0 L400.0,319.0 L401.0,319.0 L401.0,319.0 L402.0,319.0 L402.0,319.0 L403.0,319.0 L403.0,319.0 L404.0,319.0 L404.0,319.0 L405.0,319.0 L405.0,319.0 L406.0,319.0 L406.0,319.0 L407.0,319.0 L407.0,319.0 L408.0,319.0 L408.0,319.0 L409.0,319.0 L409.0,319.0 L410.0,319.0 L410.0,319.0 L411.0,319.0 L411.0,319.0 L412.0,319.0 L412.0,319.0 L413.0,319.0 L413.0,319.0 L414.0,319.0 L414.0,319.0 L415.0,319.0 L415.0,319.0 L416.0,319.0 L416.0,319.0 L417.0,319.0 L417.0,319.0 L418.0,319.0 L418.0,319.0 L419.0,319.0 L419.0,319.0 L420.0,319.0 L420.0,319.0 L421.0,319.0 L421.0,319.0 L422.0,319.0 L422.0,319.0 L423.0,319.0 L423.0,319.0 L424.0,319.0 L424.0,319.0 L425.0,319.0 L425.0,319.0 L426.0,319.0 L426.0,319.0 L427.0,319.0 L427.0,319.0 L428.0,319.0 L428.0,319.0 L429.0,319.0 L429.0,319.0 L430.0,319.0 L430.0,319.0 L431.0,319.0 L431.0,319.0 L432.0,319.0 L432.0,319.0 L433.0,319.0 L433.0,319.0 L434.0,319.0 L434.0,319.0 L435.0,319.0 L435.0,319.0 L436.0,319.0 L436.0,319.0 L437.0,319.0 L437.0,319.0 L438.0,319.0 L438.0,319.0 L439.0,319.0 L439.0,319.0 L440.0,319.0 L440.0,319.0 L441.0,319.0 L441.0,319.0 L442.0,319.0 L442.0,319.0 L443.0,319.0 L443.0,319.0 L444.0,319.0 L444.0,319.0 L445.0,319.0 L445.0,319.0 L446.0,319.0 L446,319 Z" fill="#2acf8b"/>
<rect x="336" y="307" width="110" height="1" fill="#62cc98"/>
<rect x="336" y="318.5" width="110" height="1.5" fill="#5fcf9a"/>
<path d="M336,296 L340.5,296 L336,300.5 Z" fill="#e8e8e8" shape-rendering="geometricPrecision"/>
<rect x="346.5" y="299.5" width="11" height="10" fill="#595454" stroke="#a8a8a8" stroke-width="1"/>
<g transform="translate(346.5,299.5) scale(1.1,1.0)" fill="none" stroke="#111" stroke-width="1.27" stroke-linecap="round" shape-rendering="geometricPrecision"><path d="M2.0,9.0 L4.0,2.6 Q4.4,1.4 5.6,1.4 L7.0,1.4"/><path d="M2.6,4.2 L5.8,4.2"/><path d="M5.0,4.6 L8.4,8.6"/><path d="M8.8,4.6 L4.8,8.8"/></g>
<rect x="373" y="321" width="96" height="24" fill="#1d6547"/>
<path d="M373,345 L373.0,345.0 L374.0,345.0 L374.0,345.0 L375.0,345.0 L375.0,345.0 L376.0,345.0 L376.0,345.0 L377.0,345.0 L377.0,345.0 L378.0,345.0 L378.0,345.0 L379.0,345.0 L379.0,345.0 L380.0,345.0 L380.0,345.0 L381.0,345.0 L381.0,333.4 L382.0,333.4 L382.0,336.0 L383.0,336.0 L383.0,335.2 L384.0,335.2 L384.0,332.4 L385.0,332.4 L385.0,336.0 L386.0,336.0 L386.0,336.0 L387.0,336.0 L387.0,335.7 L388.0,335.7 L388.0,334.2 L389.0,334.2 L389.0,335.9 L390.0,335.9 L390.0,331.9 L391.0,331.9 L391.0,334.5 L392.0,334.5 L392.0,336.0 L393.0,336.0 L393.0,334.8 L394.0,334.8 L394.0,335.1 L395.0,335.1 L395.0,333.9 L396.0,333.9 L396.0,333.5 L397.0,333.5 L397.0,336.1 L398.0,336.1 L398.0,336.3 L399.0,336.3 L399.0,333.7 L400.0,333.7 L400.0,337.1 L401.0,337.1 L401.0,337.6 L402.0,337.6 L402.0,337.8 L403.0,337.8 L403.0,337.9 L404.0,337.9 L404.0,336.5 L405.0,336.5 L405.0,338.9 L406.0,338.9 L406.0,339.1 L407.0,339.1 L407.0,337.0 L408.0,337.0 L408.0,338.6 L409.0,338.6 L409.0,337.7 L410.0,337.7 L410.0,337.8 L411.0,337.8 L411.0,338.9 L412.0,338.9 L412.0,339.1 L413.0,339.1 L413.0,336.0 L414.0,336.0 L414.0,336.4 L415.0,336.4 L415.0,338.9 L416.0,338.9 L416.0,336.6 L417.0,336.6 L417.0,335.9 L418.0,335.9 L418.0,336.4 L419.0,336.4 L419.0,335.7 L420.0,335.7 L420.0,335.1 L421.0,335.1 L421.0,333.6 L422.0,333.6 L422.0,336.2 L423.0,336.2 L423.0,334.6 L424.0,334.6 L424.0,335.6 L425.0,335.6 L425.0,335.9 L426.0,335.9 L426.0,334.9 L427.0,334.9 L427.0,334.9 L428.0,334.9 L428.0,334.8 L429.0,334.8 L429.0,334.2 L430.0,334.2 L430.0,333.8 L431.0,333.8 L431.0,333.7 L432.0,333.7 L432.0,334.0 L433.0,334.0 L433.0,334.3 L434.0,334.3 L434.0,335.3 L435.0,335.3 L435.0,337.0 L436.0,337.0 L436.0,337.8 L437.0,337.8 L437.0,336.9 L438.0,336.9 L438.0,335.3 L439.0,335.3 L439.0,337.3 L440.0,337.3 L440.0,339.2 L441.0,339.2 L441.0,339.1 L442.0,339.1 L442.0,337.1 L443.0,337.1 L443.0,332.8 L444.0,332.8 L444.0,336.4 L445.0,336.4 L445.0,338.9 L446.0,338.9 L446.0,338.1 L447.0,338.1 L447.0,336.4 L448.0,336.4 L448.0,336.8 L449.0,336.8 L449.0,333.5 L450.0,333.5 L450.0,337.4 L451.0,337.4 L451.0,336.3 L452.0,336.3 L452.0,332.9 L453.0,332.9 L453.0,335.6 L454.0,335.6 L454.0,334.3 L455.0,334.3 L455.0,334.7 L456.0,334.7 L456.0,335.1 L457.0,335.1 L457.0,335.7 L458.0,335.7 L458.0,333.1 L459.0,333.1 L459.0,336.5 L460.0,336.5 L460.0,337.3 L461.0,337.3 L461.0,338.0 L462.0,338.0 L462.0,338.0 L463.0,338.0 L463.0,338.7 L464.0,338.7 L464.0,340.8 L465.0,340.8 L465.0,341.7 L466.0,341.7 L466.0,341.8 L467.0,341.8 L467.0,344.1 L468.0,344.1 L468.0,344.6 L469.0,344.6 L469,345 Z" fill="#2acf8b"/>
<rect x="373" y="344" width="96" height="1" fill="#5fcf9a"/>
<rect x="373" y="321" width="1" height="24" fill="#4fb888"/>
<path d="M373,321 L377.5,321 L373,325.5 Z" fill="#e8e8e8" shape-rendering="geometricPrecision"/>
<rect x="383.5" y="324.5" width="11" height="10.5" fill="#595454" stroke="#a8a8a8" stroke-width="1"/>
<g transform="translate(383.5,324.5) scale(1.1,1.05)" fill="none" stroke="#111" stroke-width="1.27" stroke-linecap="round" shape-rendering="geometricPrecision"><path d="M2.0,9.0 L4.0,2.6 Q4.4,1.4 5.6,1.4 L7.0,1.4"/><path d="M2.6,4.2 L5.8,4.2"/><path d="M5.0,4.6 L8.4,8.6"/><path d="M8.8,4.6 L4.8,8.8"/></g>
<rect x="359" y="79" width="1" height="306" fill="#16261e"/>
<rect x="360" y="77" width="1" height="308" fill="#58a484"/>
<rect x="360" y="180" width="1.6" height="49" fill="#7a8fe6"/>
<rect x="360" y="234" width="1" height="61" fill="#1f8a60"/>
<rect x="360" y="296" width="1" height="24" fill="#5fd0a0"/>
<path d="M355,65 L366,65 L366,73 L360.5,77 L355,73 Z" fill="#3f82e6" shape-rendering="geometricPrecision"/>
<path d="M362.3,67.6 L362.3,80.6 L365.3,77.8 L367.8,83.2 L369.9,82.2 L367.5,77.0 L371.3,77.0 Z" fill="#111" stroke="#f2f2f2" stroke-width="1.1" stroke-linejoin="round" shape-rendering="geometricPrecision"/>
<g transform="translate(275.5,208.6) scale(0.93)" fill="none" stroke="#3a1048" stroke-width="1.45" stroke-linecap="round" stroke-linejoin="round" shape-rendering="geometricPrecision"><path d="M4.2,0.8 L1.2,4.6"/><path d="M3.4,2.4 L8.0,2.4 Q7.2,7.2 2.0,9.6"/><path d="M7.6,0.4 L8.2,1.6"/><path d="M9.0,0.2 L9.6,1.4"/></g><g transform="translate(286.1,208.6) scale(0.93)" fill="none" stroke="#3a1048" stroke-width="1.45" stroke-linecap="round" stroke-linejoin="round" shape-rendering="geometricPrecision"><path d="M2.6,1.2 L7.4,1.2"/><path d="M1.6,4.0 L8.4,4.0 Q7.8,8.0 3.0,9.6"/></g><g transform="translate(296.7,208.6) scale(0.93)" fill="none" stroke="#3a1048" stroke-width="1.45" stroke-linecap="round" stroke-linejoin="round" shape-rendering="geometricPrecision"><path d="M1.6,2.2 L8.6,2.2 Q8.0,7.6 2.6,9.6"/></g><g transform="translate(307.3,208.6) scale(0.93)" fill="none" stroke="#3a1048" stroke-width="1.45" stroke-linecap="round" stroke-linejoin="round" shape-rendering="geometricPrecision"><path d="M7.6,3.6 Q5.6,6.2 3.0,7.2"/><path d="M5.8,5.6 L5.8,9.6"/></g><g transform="translate(317.9,208.6) scale(0.93)" fill="none" stroke="#3a1048" stroke-width="1.45" stroke-linecap="round" stroke-linejoin="round" shape-rendering="geometricPrecision"><path d="M2.6,4.6 L3.4,6.2"/><path d="M4.8,4.2 L5.4,5.8"/><path d="M8.0,4.4 Q7.4,8.4 3.6,9.6"/></g><g transform="translate(328.5,208.6) scale(0.93)" fill="none" stroke="#3a1048" stroke-width="1.45" stroke-linecap="round" stroke-linejoin="round" shape-rendering="geometricPrecision"><path d="M4.2,0.8 L1.2,4.6"/><path d="M3.4,2.4 L8.4,2.4 Q7.6,7.2 2.2,9.6"/></g>
<g transform="translate(442.8,184) scale(1.0)" fill="none" stroke="#2b0d3a" stroke-width="1.30" stroke-linecap="round" stroke-linejoin="round" shape-rendering="geometricPrecision"><path d="M1,2.2 L4.6,2.2"/><path d="M2.8,0.6 L2.8,4.6"/><path d="M0.8,4.6 L4.8,4.6"/><path d="M2.6,6 L2.6,8.4"/><path d="M1.2,5.8 L1.2,9 Q5,9.6 9.8,9.6"/><path d="M5.2,1.2 L9.2,1.2 L9.2,3.8 L8.2,4"/><path d="M6.6,1.2 Q6.4,3.4 5.2,4.2"/><path d="M5.8,5.6 L9.2,5.6 L9.2,8 L5.8,8 Z"/></g><g transform="translate(454.0,184) scale(1.0)" fill="none" stroke="#2b0d3a" stroke-width="1.30" stroke-linecap="round" stroke-linejoin="round" shape-rendering="geometricPrecision"><path d="M3.4,0.8 L5.0,1.8 Q5.2,6.6 1.0,9.6"/><path d="M5.0,3.6 Q6.6,7.8 9.6,9.6"/></g><g transform="translate(465.2,184) scale(1.0)" fill="none" stroke="#2b0d3a" stroke-width="1.30" stroke-linecap="round" stroke-linejoin="round" shape-rendering="geometricPrecision"><path d="M1.2,9.8 L1.2,0.8 L4.4,0.8 L4.4,4.6 L1.2,4.6"/><path d="M1.2,2.7 L4.4,2.7"/><path d="M8.8,9.8 L8.8,0.8 L5.6,0.8 L5.6,4.6 L8.8,4.6"/><path d="M5.6,2.7 L8.8,2.7"/></g>
<g transform="translate(76,354) scale(0.95)" fill="none" stroke="#a8a8a8" stroke-width="1.16" stroke-linecap="round" stroke-linejoin="round" shape-rendering="geometricPrecision"><path d="M1.4,2.0 L8.6,2.0 Q7.0,5.0 5.0,6.2"/><path d="M3.8,5.0 L6.4,8.8"/></g><g transform="translate(87,354) scale(0.95)" fill="none" stroke="#a8a8a8" stroke-width="1.16" stroke-linecap="round" stroke-linejoin="round" shape-rendering="geometricPrecision"><path d="M2.0,1.6 L7.6,1.6 Q6.0,6.4 1.2,9.4"/><path d="M5.2,5.6 L8.8,9.2"/></g><g transform="translate(98,354) scale(0.95)" fill="none" stroke="#a8a8a8" stroke-width="1.16" stroke-linecap="round" stroke-linejoin="round" shape-rendering="geometricPrecision"><path d="M4.2,0.6 L1.2,4.4"/><path d="M3.4,2.2 L8.4,2.2 Q7.6,7.2 2.2,9.6"/><path d="M3.2,4.6 L6.8,6.2"/></g><g transform="translate(109,354) scale(0.95)" fill="none" stroke="#a8a8a8" stroke-width="1.16" stroke-linecap="round" stroke-linejoin="round" shape-rendering="geometricPrecision"><path d="M0.8,5.2 L9.2,5.0"/></g>
<g transform="translate(495.6,252.0) scale(0.96)" fill="none" stroke="#15140c" stroke-width="1.35" stroke-linecap="round" stroke-linejoin="round" shape-rendering="geometricPrecision"><path d="M1.8,2.0 L8.2,2.0 L8.2,8.4 L1.8,8.4"/></g><g transform="translate(506.05,252.0) scale(0.96)" fill="none" stroke="#15140c" stroke-width="1.35" stroke-linecap="round" stroke-linejoin="round" shape-rendering="geometricPrecision"><path d="M1.8,1.8 L3.4,3.2"/><path d="M1.6,9.2 Q6.4,7.8 8.6,2.6"/></g><g transform="translate(516.5,252.0) scale(0.96)" fill="none" stroke="#15140c" stroke-width="1.35" stroke-linecap="round" stroke-linejoin="round" shape-rendering="geometricPrecision"><path d="M2.0,1.6 L7.6,1.6 Q6.0,6.4 1.2,9.4"/><path d="M5.2,5.6 L8.8,9.2"/></g><g transform="translate(526.95,252.0) scale(0.96)" fill="none" stroke="#15140c" stroke-width="1.35" stroke-linecap="round" stroke-linejoin="round" shape-rendering="geometricPrecision"><path d="M4.2,0.6 L1.2,4.4"/><path d="M3.4,2.2 L8.4,2.2 Q7.6,7.2 2.2,9.6"/><path d="M3.2,4.6 L6.8,6.2"/></g><g transform="translate(537.4,252.0) scale(0.96)" fill="none" stroke="#15140c" stroke-width="1.35" stroke-linecap="round" stroke-linejoin="round" shape-rendering="geometricPrecision"><path d="M1.8,1.8 L3.4,3.2"/><path d="M1.6,9.2 Q6.4,7.8 8.6,2.6"/></g><g transform="translate(547.85,252.0) scale(0.96)" fill="none" stroke="#15140c" stroke-width="1.35" stroke-linecap="round" stroke-linejoin="round" shape-rendering="geometricPrecision"><path d="M3.8,0.6 L3.8,9.6"/><path d="M3.8,3.8 L7.4,6.0"/></g>
</svg>
<div class="a" style="left:245px;top:0;width:360px;height:100px;overflow:hidden"><div class="a" style="left:-24.9px;top:53.5px;font-size:10px;color:#9c9c9c;">00;00;00;00</div><div class="a" style="left:80.2px;top:53.5px;font-size:10px;color:#9c9c9c;">00;00;04;00</div><div class="a" style="left:186.3px;top:53.5px;font-size:10px;color:#9c9c9c;">00;00;08;00</div><div class="a" style="left:292.4px;top:53.5px;font-size:10px;color:#9c9c9c;">00;00;12;00</div></div>
<div class="a" style="left:35px;top:14.5px;font-size:11px;color:#d2d2d2;letter-spacing:-0.45px">For_Audition01</div>
<div class="a" style="left:160.5px;top:14.5px;font-size:11px;color:#9a9a9a;letter-spacing:-0.45px">For_Audition02</div>
<div class="a" style="left:26.5px;top:39.5px;font-size:15.5px;color:#58a4ea;font-weight:bold;letter-spacing:0.3px">00;00;04;11</div>
<div class="a" style="left:82px;top:161.5px;font-size:11px;color:#b4b4b4;">V3</div>
<div class="a" style="left:82px;top:186px;font-size:11px;color:#b4b4b4;">V2</div>
<div class="a" style="left:82px;top:210.8px;font-size:11px;color:#9cc8ee;">V1</div>
<div class="a" style="left:29.5px;top:258.5px;font-size:11px;color:#9cc8ee;">A1</div>
<div class="a" style="left:81.5px;top:258.5px;font-size:11px;color:#9cc8ee;">A1</div>
<div class="a" style="left:81.5px;top:303px;font-size:11px;color:#9cc8ee;">A2</div>
<div class="a" style="left:81.5px;top:328px;font-size:11px;color:#9cc8ee;">A3</div>
<div class="a" style="left:141px;top:242.0px;font-size:10px;color:#b0b0b0;">M</div>
<div class="a" style="left:169px;top:242.0px;font-size:10px;color:#b0b0b0;">S</div>
<div class="a" style="left:141px;top:304.5px;font-size:10px;color:#b0b0b0;">M</div>
<div class="a" style="left:169px;top:304.5px;font-size:10px;color:#b0b0b0;">S</div>
<div class="a" style="left:141px;top:329.5px;font-size:10px;color:#b0b0b0;">M</div>
<div class="a" style="left:169px;top:329.5px;font-size:10px;color:#b0b0b0;">S</div>
<div class="a" style="left:107.5px;top:268px;font-size:10px;color:#a2a2a2;">Audio 1</div>
<div class="a" style="left:154px;top:354.5px;font-size:10px;color:#6aa6e4;">0.0</div>
<div class="a" style="left:373.5px;top:184px;font-size:10.5px;color:#2b0d3a;letter-spacing:0.03px;-webkit-text-stroke:0.4px #2b0d3a">Adobe Audition</div>
<div class="a" style="left:248.2px;top:249.5px;font-size:9px;color:#a8c8b4;">L</div>
<div class="a" style="left:248.2px;top:281px;font-size:9px;color:#a8c8b4;">R</div>
</body></html>
